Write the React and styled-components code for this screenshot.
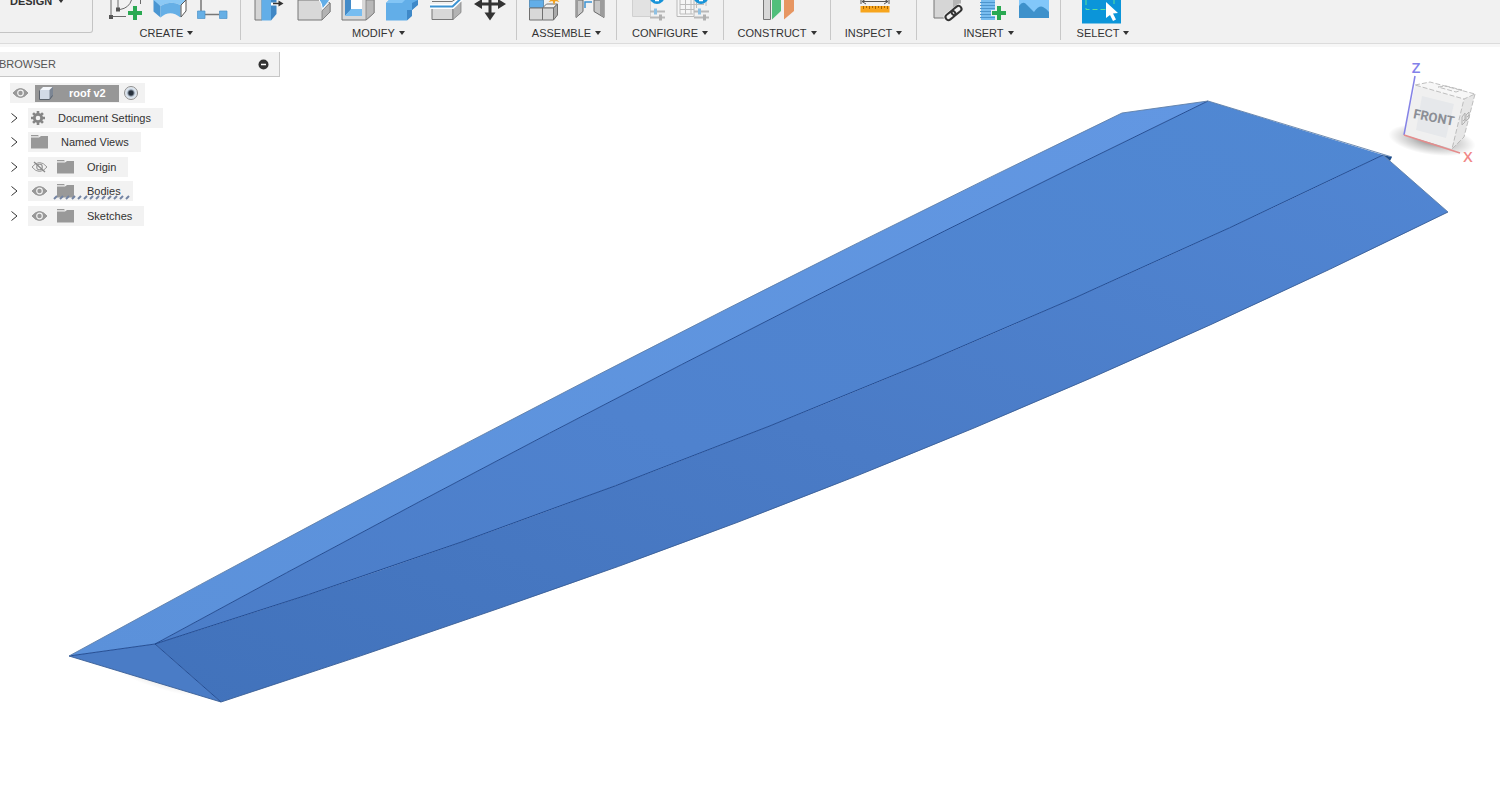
import React from "react";
import styled, { createGlobalStyle } from "styled-components";

const GlobalStyle = createGlobalStyle`
  *, *::before, *::after { box-sizing: border-box; }
  body {
    margin: 0;
    background: #ffffff;
    color: #333333;
    font-family: "Liberation Sans", Arial, sans-serif;
    font-size: 11px;
    line-height: 14px;
  }
  button { font: inherit; color: inherit; background: none; border: 0; padding: 0; cursor: pointer; }
  ul { list-style: none; margin: 0; padding: 0; }
  svg { display: block; }
`;

const Page = styled.div`
  display: flex;
  flex-direction: column;
  min-height: 100vh;
  overflow: hidden;
`;

const Toolbar = styled.header`
  display: flex;
  height: 47px;
  overflow: hidden;
  background: linear-gradient(#f1f1f1 43px, #dcdcdc 43px, #dcdcdc 44px, #f7f7f7 44px);
`;

const WorkspaceButton = styled.button`
  display: flex;
  align-items: center;
  gap: 6px;
  width: 93px;
  height: 64px;
  margin-top: -31px;
  && {
    padding-left: 10px;
    border: 1px solid #c4c4c4;
    border-left: 0;
    border-radius: 0 0 3px 0;
    font-weight: bold;
  }
`;

const Group = styled.section`
  display: flex;
  flex-direction: column;
  align-items: center;
  flex: 0 0 ${(p) => p.$width}px;
  height: 40px;
  border-right: ${(p) => (p.$last ? "0" : "1px solid #c8c8c8")};
`;

const IconRow = styled.div`
  display: flex;
  gap: 12px;
`;

const IconButton = styled.button`
  display: block;
  width: ${(p) => p.$width || 32}px;
  height: 24px;
`;

const IconSvg = styled.svg`
  width: 100%;
  height: 24px;
  overflow: visible;
`;

const GroupLabel = styled.button`
  display: flex;
  flex-shrink: 0;
  align-items: center;
  gap: 4px;
  height: 18px;
  white-space: nowrap;
`;

const Caret = styled.span`
  border: 3px solid transparent;
  border-top: 4px solid #333333;
  border-bottom: 0;
`;

const Viewport = styled.main`
  display: grid;
  grid-template-columns: 280px 1fr;
  flex: 1;
`;

const ModelSvg = styled.svg`
  grid-area: 1 / 1 / 2 / 3;
  width: 100%;
  height: auto;
`;

const BrowserPanel = styled.aside`
  grid-area: 1 / 1;
  align-self: start;
  z-index: 1;
  padding-top: 5px;
`;

const PanelHeader = styled.div`
  display: flex;
  align-items: center;
  justify-content: space-between;
  height: 25px;
  padding-right: 10px;
  background: #f2f2f2;
  border: solid #c6c6c6;
  border-width: 0 1px 1px 0;
`;

const PanelTitle = styled.h2`
  margin: 0 0 0 -1px;
  font-size: 11px;
  font-weight: normal;
  color: #555555;
`;

const Tree = styled.ul`
  && { padding-top: 6px; }
  display: flex;
  flex-direction: column;
  justify-content: space-between;
  height: 149px;
`;

const TreeItem = styled.li`
  display: flex;
  align-items: center;
  height: 20px;
  padding-left: 10px;
`;

const Expander = styled.button`
  width: 18px;
  height: 20px;
`;

const ItemBody = styled.div`
  position: relative;
  display: flex;
  align-items: center;
  height: 20px;
  padding: 0 12px 0 3px;
  background: #f2f2f2;
  white-space: nowrap;
`;

const VisibilityButton = styled.button`
  margin-right: 9px;
`;

const ItemText = styled.span`
  margin-left: 13px;
`;

const RootBody = styled(ItemBody)`
  padding: 0 7px 0 2px;
`;

const RootName = styled.div`
  display: flex;
  align-items: center;
  gap: 15px;
  width: 84px;
  height: 17px;
  margin: 0 5px 0 6px;
  padding-left: 4px;
  background: #979797;
  color: #ffffff;
  font-weight: bold;
`;

const ActiveRadio = styled.input`
  appearance: none;
  width: 14px;
  height: 14px;
  margin: 0;
  border: 1px solid #8e8e8e;
  border-radius: 50%;
  background: radial-gradient(circle, #26303c 0 2px, #cfdbe8 4px, #e8edf2 6px);
`;

const Hatching = styled.svg`
  position: absolute;
  left: 25px;
  bottom: 1px;
  width: 80px;
  height: 5px;
`;

const CubeSvg = styled.svg`
  grid-area: 1 / 2;
  justify-self: end;
  align-self: start;
  z-index: 1;
  width: 120px;
  height: 128px;
`;

const Plus = ({ x, y }) => (
  <path d={`M${x - 7} ${y}h14M${x} ${y - 7}v14`} stroke="#2aa952" strokeWidth="4" fill="none" />
);

const Sliders = () => (
  <g fill="none" strokeWidth="2">
    <path d="M18 11.500h15M18 17.500h15" stroke="#b9b9b9" />
    <path d="M23.500 8.500v6" stroke="#8fc1e3" strokeWidth="3" />
    <path d="M28.500 14.500v6" stroke="#b0b0b0" strokeWidth="3" />
    <circle cx="25" cy="-3.500" r="7.500" fill="#1793d8" stroke="none" />
    <path d="M23 .5h4" stroke="#ffffff" strokeWidth="1.500" />
  </g>
);

const icons = {
  sketch: (
    <g fill="none" stroke="#6b6b6b">
      <path d="M4 0v15M6 16.500h13M11 0v8" />
      <path d="M13 9.500Q22 8 24.500 0M33.500 0v4" />
      <path d="M2 15h4v4H2zM9 7.500h4v4H9z" fill="#555555" stroke="none" />
      <Plus x={28} y={13} />
    </g>
  ),
  bend: (
    <g>
      <path d="M2.500 0v11.500l7 6V6L4 0z" fill="#4a96d2" />
      <path d="M2.500 0h33l-6 5Q19 0 9.500 6z" fill="#8bc9f5" />
      <path d="M9.500 6Q19 0 29.500 5v12.500Q19 9 9.500 17.500z" fill="#65afe6" />
      <path d="M30 5l5-5v11l-5 6z" fill="#ffffff" stroke="#555555" />
    </g>
  ),
  pattern: (
    <g>
      <path d="M6 0v11M10 14.500h14" stroke="#777777" strokeWidth="1.500" />
      <path d="M2.500 11h7.500v7.500H2.500zM24.500 11H32v7.500h-7.500z" fill="#66afe5" stroke="#4c92c9" strokeWidth=".7" />
    </g>
  ),
  press: (
    <g>
      <path d="M2 0v20h7V0" fill="#d5d5d5" stroke="#777777" />
      <path d="M8.500 0H18v20.500H8.500z" fill="#62aee8" />
      <path d="M18 0h5.500v14L18 20.500z" fill="#3f87c5" />
      <path d="M18 4h10" stroke="#ffffff" strokeWidth="3" />
      <path d="M20 3.500h8" stroke="#333333" strokeWidth="1.500" />
      <path d="M25.500 .5l5 3-5 3z" fill="#333333" />
    </g>
  ),
  fillet: (
    <g>
      <path d="M1 0v20h24l8-8V3L28 0z" fill="#d8d8d8" stroke="#777777" />
      <path d="M25 20V11l8-8v9z" fill="#b3b3b3" stroke="#777777" strokeWidth=".7" />
      <path d="M21-2q4 5 4.500 11L33 0z" fill="#62aee8" stroke="#ffffff" />
    </g>
  ),
  shell: (
    <g>
      <path d="M1 0v20h24l8-7V0" fill="#d8d8d8" stroke="#777777" />
      <path d="M25 20V0h8v13z" fill="#b8b8b8" stroke="#777777" strokeWidth=".7" />
      <path d="M4 0v16h17V0z" fill="#ffffff" />
      <path d="M4 0v16l6-6V0z" fill="#438bc8" />
      <path d="M4 16l6-7h11v7z" fill="#77bdf0" />
    </g>
  ),
  combine: (
    <g>
      <path d="M1 3l3-3h29v4l-6 6-5 1v9.500H1z" fill="#62aee8" />
      <path d="M22 20.500V10h5v6zM27 10V3l6-3v5z" fill="#3f89c8" />
      <path d="M1 3l3-3h16l-3 3z" fill="#83c5f5" />
    </g>
  ),
  offset: (
    <g>
      <path d="M3 8.500h21v11H3z" fill="#d8d8d8" stroke="#777777" />
      <path d="M24 8.500l8-7v11l-8 7z" fill="#b3b3b3" stroke="#777777" strokeWidth=".7" />
      <path d="M1 6.500h22.500L32.500-2" fill="none" stroke="#ffffff" strokeWidth="5" />
      <path d="M1 6.500h22.500L32.500-2" fill="none" stroke="#3c93d2" strokeWidth="2" />
      <path d="M3 1.500h20l3-2" fill="none" stroke="#777777" />
    </g>
  ),
  move: (
    <g fill="#333333">
      <path d="M5 2.500h24v3H5zM15.500 0h3v14h-3z" />
      <path d="M1 4l8-5v10zM33 4l-8-5v10zM17 20.500l-5.500-8h11z" />
    </g>
  ),
  component: (
    <g stroke="#707070">
      <path d="M.5 0h14v7.500H.5z" fill="#62aee8" stroke="#5c93bd" />
      <path d="M.5 8h13v12H.5z" fill="#d8d8d8" />
      <path d="M13.500 8l4-4h11l-4 4z" fill="#f1f1f1" />
      <path d="M13.500 8h11v12h-11z" fill="#d8d8d8" />
      <path d="M24.500 8l4-4v11l-4 5z" fill="#aaaaaa" />
      <path d="M24-7l1.500 4 5-1-3 3 3 3-4-1-1.500 4-1.500-4-4 1 3-3-3-2 4 0z" fill="#f5a21c" stroke="none" />
    </g>
  ),
  joint: (
    <g fill="#c7c7c7" stroke="#686868">
      <path d="M3 0v17.500l7-6V0zM31 0v17.500l-10-6V0z" />
      <path d="M27 0v15l4 2.500V0zM3 0v17.500l2-2V0z" fill="#9c9c9c" stroke="none" />
      <path d="M12 8V2h7" fill="none" stroke="#3c93d2" strokeWidth="1.500" />
    </g>
  ),
  configure: (
    <g>
      <path d="M.5 0v16.500h18V0" fill="#e2e2e2" stroke="#d0d0d0" />
      <Sliders />
    </g>
  ),
  table: (
    <g>
      <path d="M1 0v16.500h17V0" fill="#f6f6f6" stroke="#b8b8b8" />
      <path d="M4 0v14h13M9.500 0v14M15 0v14M20.500 0v8M4 4.500h24M4 9.500h14M30 0v6" fill="none" stroke="#bcbcbc" />
      <Sliders />
    </g>
  ),
  construct: (
    <g>
      <path d="M2.500 0v19.500h7V0" fill="#d8d8d8" stroke="#777777" />
      <path d="M11 0h9v11l-9 8.500z" fill="#51bf7b" />
      <path d="M23 0h10v11l-10 8.500z" fill="#e79662" />
    </g>
  ),
  measure: (
    <g>
      <path d="M3 0v4M31 0v4M4 1.500h26M8-1L4 1.500 8 4M26-1l4 2.500L26 4" fill="none" stroke="#555555" />
      <path d="M2.500 6h29v6.500h-29z" fill="#f7a51d" />
      <path d="M5.500 6v3M8.500 6v2M11.500 6v3M14.500 6v2M17.500 6v3M20.500 6v2M23.500 6v3M26.500 6v2M29.500 6v3" stroke="#a86500" />
    </g>
  ),
  derive: (
    <g>
      <path d="M5 0v18h19l7-7V0" fill="#d6d6d6" stroke="#777777" />
      <path d="M24 0h7v11l-7 7z" fill="#b5b5b5" />
      <path d="M19 17L31 8" stroke="#f1f1f1" strokeWidth="9" strokeLinecap="round" />
      <g fill="none" stroke="#333333" strokeWidth="2">
        <rect x="22" y="7.500" width="11" height="6" rx="3" transform="rotate(-38 27.500 10.500)" />
        <rect x="16" y="12.500" width="11" height="6" rx="3" transform="rotate(-38 21.500 15.500)" />
      </g>
    </g>
  ),
  fastener: (
    <g>
      <path d="M8 0h14v20H8z" fill="#78bdf0" />
      <path d="M7 2.500h15M7 5.500h15M7 8.500h15M7 11.500h15M7 14.500h15M7 17.500h15" stroke="#4d95cd" />
      <path d="M18 13h16M26 5v17" stroke="#f1f1f1" strokeWidth="6" />
      <Plus x={26} y={13} />
    </g>
  ),
  canvas: (
    <g>
      <path d="M2 0h30v18H2z" fill="#82c7fa" />
      <path d="M2 6q4-6 8-1l7 7q5-7 9-5 4 2 6 5v6H2z" fill="#3e91cb" />
    </g>
  ),
  select: (
    <g>
      <path d="M-1 0h39v23.500H-1z" fill="#0b95d9" />
      <path d="M3 0v9.500h20M31 0v4" fill="none" stroke="#5be09a" strokeDasharray="5 3" />
      <path d="M23 2v16l4-3 3 6 3-1.500-3-6 5-.5z" fill="#ffffff" />
    </g>
  ),
};

const groups = [
  { label: "CREATE", width: 148, icons: ["sketch", "bend", "pattern"] },
  { label: "MODIFY", width: 276, icons: ["press", "fillet", "shell", "combine", "offset", "move"] },
  { label: "ASSEMBLE", width: 100, icons: ["component", "joint"] },
  { label: "CONFIGURE", width: 107, icons: ["configure", "table"] },
  { label: "CONSTRUCT", width: 107, icons: ["construct"] },
  { label: "INSPECT", width: 86, icons: ["measure"] },
  { label: "INSERT", width: 144, icons: ["derive", "fastener", "canvas"] },
  { label: "SELECT", width: 84, icons: ["select"], iconWidth: 40 },
];

const Eye = ({ hidden }) => (
  <svg width="17" height="12" viewBox="0 0 17 12" fill="none">
    <path
      d="M1 6Q8.500-3 16 6 8.500 15 1 6z"
      fill={hidden ? "none" : "#999999"}
      stroke="#999999"
    />
    <circle cx="8.500" cy="6" r="2.800" stroke={hidden ? "#999999" : "#f2f2f2"} strokeWidth="1.200" />
    {hidden && <path d="M3 1l11 10" stroke="#888888" strokeWidth="1.300" />}
  </svg>
);

const Folder = () => (
  <svg width="17" height="14" viewBox="0 0 17 14" fill="#999999">
    <path d="M0 2.500h8L10 1h7v12.500H0zM0 0h7l1 1.200H0z" />
  </svg>
);

const Gear = () => (
  <svg width="14" height="14" viewBox="-7 -7 14 14">
    <circle r="3.700" fill="none" stroke="#858585" strokeWidth="2.800" />
    {[0, 45, 90, 135].map((a) => (
      <path key={a} d="M0-7v3M0 7v-3" stroke="#858585" strokeWidth="2.600" transform={`rotate(${a})`} />
    ))}
  </svg>
);

const BodyCube = () => (
  <svg width="15" height="15" viewBox="0 0 15 15">
    <path d="M1 4l3-3h10v9l-3 4H1z" fill="#7c8694" />
    <path d="M1 4h9.500v9.500H1z" fill="#d2dae6" />
    <path d="M1 4l3-3h9.500l-3 3z" fill="#f4f7fb" />
    <path d="M.5 4.500v9h10l3-4" fill="none" stroke="#5b626c" />
  </svg>
);

const Chevron = () => (
  <svg width="8" height="12" viewBox="0 0 8 12">
    <path d="M1.500 1.500L7 6l-5.500 4.500" fill="none" stroke="#333333" />
  </svg>
);

const items = [
  { name: "Document Settings", gear: true },
  { name: "Named Views" },
  { name: "Origin", eye: true, hidden: true },
  { name: "Bodies", eye: true, hatched: true },
  { name: "Sketches", eye: true },
];

function Model() {
  return (
    <ModelSvg viewBox="0 47 1500 738" role="img" aria-label="Roof body">
      <defs>
        <linearGradient id="upper" x1="0" y1="1" x2="1" y2="0">
          <stop offset="0" stopColor="#5b91da" />
          <stop offset="1" stopColor="#6297e2" />
        </linearGradient>
        <linearGradient id="middle" x1="0" y1="1" x2="1" y2="0">
          <stop offset="0" stopColor="#4b7dc8" />
          <stop offset=".4" stopColor="#4f82ce" />
          <stop offset="1" stopColor="#5088d3" />
        </linearGradient>
        <linearGradient id="lower" x1="0" y1="1" x2="1" y2="0">
          <stop offset="0" stopColor="#4172bb" />
          <stop offset=".5" stopColor="#4a7bc6" />
          <stop offset="1" stopColor="#5186d3" />
        </linearGradient>
        <radialGradient id="contact">
          <stop offset="0" stopColor="#000000" stopOpacity=".1" />
          <stop offset="1" stopColor="#000000" stopOpacity="0" />
        </radialGradient>
      </defs>
      <ellipse cx="160" cy="680" rx="50" ry="9" fill="url(#contact)" transform="rotate(17 160 680)" />
      <path d="M69 656Q595 368 1122 113L1208 101Q681 357 155 644z" fill="url(#upper)" />
      <path d="M155 644Q681 357 1208 101L1383 155Q769 453 155 644z" fill="url(#middle)" />
      <path d="M155 644Q769 453 1383 155L1448 212Q974 446 500 608 360 657 221 702z" fill="url(#lower)" />
      <path d="M69 656L155 644 221 702z" fill="#4a7cc6" />
      <path d="M1383 155l9 2-2 4z" fill="#1e4d8c" />
      <g fill="none" stroke="#1c458c" strokeWidth=".9">
        <path d="M69 656L155 644Q681 357 1208 101M155 644Q769 453 1383 155M155 644L221 702" />
        <path d="M69 656L221 702Q360 657 500 608 974 446 1448 212" stroke="#3a5f96" />
        <path d="M69 656Q595 368 1122 113L1208 101 1392 157M1383 155L1448 212" stroke="#5f7fa8" />
      </g>
    </ModelSvg>
  );
}

function ViewCube() {
  return (
    <CubeSvg viewBox="1380 47 120 128" role="img" aria-label="View cube">
      <defs>
        <radialGradient id="cubeShadow">
          <stop offset="0" stopColor="#000000" stopOpacity=".5" />
          <stop offset=".5" stopColor="#000000" stopOpacity=".22" />
          <stop offset="1" stopColor="#000000" stopOpacity="0" />
        </radialGradient>
      </defs>
      <ellipse cx="1432" cy="140" rx="44" ry="15" fill="url(#cubeShadow)" transform="rotate(8 1432 140)" />
      <path d="M1415 85L1430 82 1475 94 1464 99z" fill="#f7f7f7" />
      <path d="M1464 99L1475 94 1464 137 1452 149z" fill="#e6e6e6" />
      <path d="M1415 85L1464 99 1452 149 1404 135z" fill="#f0f0f0" />
      <path d="M1422 96L1454 104 1446 138 1416 130z" fill="#e6e8eb" />
      <path
        d="M1415 85L1430 82 1475 94 1464 99zM1475 94L1464 137 1452 149 1464 99M1438 87l8-1 16 4-6 2z"
        fill="none"
        stroke="#b0b0b0"
        strokeWidth=".8"
        strokeDasharray="5 2"
      />
      <text
        x="1434" y="122" textAnchor="middle" fill="#8b8e95" fontSize="13" fontWeight="bold"
        fontFamily="Roboto, sans-serif" transform="rotate(11 1434 117)"
      >
        FRONT
      </text>
      <path
        d="M1462 117l3-4v9l-3 3zM1463 121l2-2M1466 115v6l3-3v-6zM1467 117l2-2"
        fill="none" stroke="#b0b0b0"
      />
      <path d="M1415 76L1404 135" stroke="#8583e6" strokeWidth="1.500" />
      <path d="M1404 135L1460 153" stroke="#e58c8c" strokeWidth="1.500" />
      <g fontFamily="'Open Sans', sans-serif" fontSize="15" fontWeight="600" textAnchor="middle">
        <text x="1416" y="73" fill="#8381ea">Z</text>
        <text x="1468" y="162" fill="#f08787">X</text>
      </g>
    </CubeSvg>
  );
}

export default function App() {
  return (
    <Page>
      <GlobalStyle />
      <Toolbar>
        <WorkspaceButton>
          DESIGN <Caret />
        </WorkspaceButton>
        {groups.map((g, i) => (
          <Group key={g.label} $width={g.width} $last={i === groups.length - 1}>
            <IconRow>
              {g.icons.map((name) => (
                <IconButton key={name} aria-label={name} $width={g.iconWidth}>
                  <IconSvg viewBox={`0 0 ${g.iconWidth || 32} 24`}>{icons[name]}</IconSvg>
                </IconButton>
              ))}
            </IconRow>
            <GroupLabel>
              {g.label}
              <Caret />
            </GroupLabel>
          </Group>
        ))}
      </Toolbar>
      <Viewport>
        <Model />
        <BrowserPanel>
          <PanelHeader>
            <PanelTitle>BROWSER</PanelTitle>
            <button aria-label="Collapse browser">
              <svg width="11" height="11" viewBox="0 0 11 11">
                <circle cx="5.500" cy="5.500" r="5" fill="#333333" />
                <path d="M3 5.500h5" stroke="#ffffff" strokeWidth="1.500" />
              </svg>
            </button>
          </PanelHeader>
          <Tree>
            <TreeItem>
              <RootBody>
                <button aria-label="Toggle roof v2"><Eye /></button>
                <RootName><BodyCube />roof v2</RootName>
                <ActiveRadio type="radio" name="active" aria-label="Activate roof v2" defaultChecked />
              </RootBody>
            </TreeItem>
            {items.map((item) => (
              <TreeItem key={item.name}>
                <Expander aria-label={`Expand ${item.name}`}><Chevron /></Expander>
                <ItemBody>
                  {item.eye && (
                    <VisibilityButton aria-label={`Toggle ${item.name}`}>
                      <Eye hidden={item.hidden} />
                    </VisibilityButton>
                  )}
                  {item.gear ? <Gear /> : <Folder />}
                  <ItemText>{item.name}</ItemText>
                  {item.hatched && (
                    <Hatching viewBox="0 0 80 5">
                      {Array.from({ length: 13 }, (_, k) => (
                        <path key={k} d={`M${k * 6 + 1} 4l3-3`} stroke="#7384a3" strokeWidth="2" />
                      ))}
                    </Hatching>
                  )}
                </ItemBody>
              </TreeItem>
            ))}
          </Tree>
        </BrowserPanel>
        <ViewCube />
      </Viewport>
    </Page>
  );
}
